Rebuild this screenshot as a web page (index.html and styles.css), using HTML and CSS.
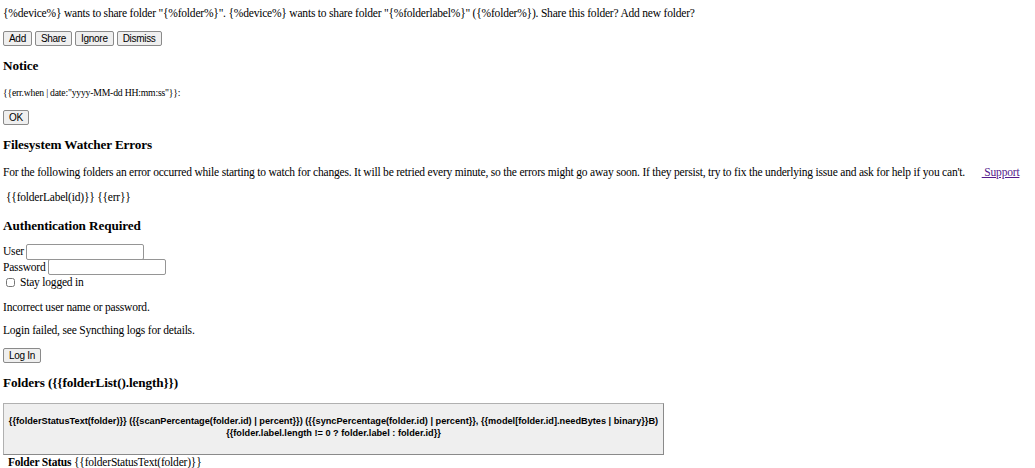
FILE: index.html
```html
<!DOCTYPE html>
<html>
<head>
<meta charset="utf-8">
<link rel="stylesheet" href="styles.css">
</head>
<body>
<p class="line">{%device%} wants to share folder "{%folder%}". {%device%} wants to share folder "{%folderlabel%}" ({%folder%}). Share this folder? Add new folder?</p>
<div class="btn-row">
  <button class="btn">Add</button>
  <button class="btn">Share</button>
  <button class="btn">Ignore</button>
  <button class="btn">Dismiss</button>
</div>
<h3 class="heading">Notice</h3>
<p class="small">{{err.when | date:"yyyy-MM-dd HH:mm:ss"}}:</p>
<div class="btn-row"><button class="btn">OK</button></div>
<h3 class="heading">Filesystem Watcher Errors</h3>
<p class="line nowrap">For the following folders an error occurred while starting to watch for changes. It will be retried every minute, so the errors might go away soon. If they persist, try to fix the underlying issue and ask for help if you can't. <a class="support" href="#">&nbsp;Support</a></p>
<p class="line indent">{{folderLabel(id)}} {{err}}</p>
<h3 class="heading before-form">Authentication Required</h3>
<div class="form">
  <label class="field">User <input class="text-input" type="text"></label>
  <label class="field">Password <input class="text-input" type="password"></label>
  <label class="field check"><input class="checkbox" type="checkbox"> Stay logged in</label>
</div>
<p class="line tight">Incorrect user name or password.</p>
<p class="line">Login failed, see Syncthing logs for details.</p>
<div class="btn-row"><button class="btn">Log In</button></div>
<h3 class="heading">Folders ({{folderList().length}})</h3>
<div class="panel-heading">
  <div>{{folderStatusText(folder)}} ({{scanPercentage(folder.id) | percent}}) ({{syncPercentage(folder.id) | percent}}, {{model[folder.id].needBytes | binary}}B)</div>
  <div>{{folder.label.length != 0 ? folder.label : folder.id}}</div>
</div>
<div class="status-row"><span class="status-label">Folder Status</span> {{folderStatusText(folder)}}</div>
</body>
</html>
```

FILE: styles.css
```css
html {
  background: #fff;
}
body {
  margin: 0;
  padding: 6px 3px 0 3px;
  font-family: "Liberation Serif", "Times New Roman", serif;
  font-size: 11.5px;
  letter-spacing: -0.2px;
  line-height: 15px;
  color: #000;
}
.line {
  margin: 0 0 10px 0;
}
.tight {
  margin-bottom: 8px;
}
.nowrap {
  white-space: nowrap;
}
.indent {
  padding-left: 3px;
  margin-bottom: 13px;
}
.small {
  font-size: 9.7px;
  letter-spacing: -0.2px;
  line-height: 14px;
  margin: 0 0 10px 0;
}
.btn-row {
  display: flex;
  gap: 3px;
  margin: 0 0 10px 0;
}
.btn {
  font-family: "Liberation Sans", Arial, sans-serif;
  font-size: 10px;
  letter-spacing: -0.3px;
  line-height: 11px;
  height: 15px;
  padding: 0 5px;
  background: #efefef;
  border: 1px solid #8a8a8a;
  border-radius: 2px;
  color: #000;
}
.heading {
  font-size: 13.2px;
  letter-spacing: -0.1px;
  line-height: 16px;
  font-weight: bold;
  margin: 12px 0 12px 0;
}
.before-form {
  margin-bottom: 10px;
}
.support {
  color: #551a8b;
  margin-left: 14px;
}
.form {
  display: flex;
  flex-direction: column;
  align-items: flex-start;
  margin-bottom: 9px;
}
.field {
  display: flex;
  align-items: center;
  gap: 2px;
  height: 15.5px;
}
.text-input {
  width: 118px;
  height: 16px;
  box-sizing: border-box;
  border: 1px solid #959595;
  border-radius: 2px;
  padding: 0 2px;
  margin: 0;
}
.check {
  padding-left: 3px;
  gap: 5px;
}
.checkbox {
  width: 9px;
  height: 9px;
  margin: 0;
}
.panel-heading {
  width: 661px;
  box-sizing: border-box;
  background: #efefef;
  border: 1px solid #b0b0b0;
  border-right-color: #8a8a8a;
  border-bottom-color: #8a8a8a;
  padding: 11px 4px 15px;
  text-align: center;
  font-family: "Liberation Sans", Arial, sans-serif;
  font-weight: bold;
  font-size: 9.2px;
  letter-spacing: 0;
  line-height: 12px;
}
.status-row {
  padding: 0 5px;
}
.status-label {
  font-weight: bold;
}
```
